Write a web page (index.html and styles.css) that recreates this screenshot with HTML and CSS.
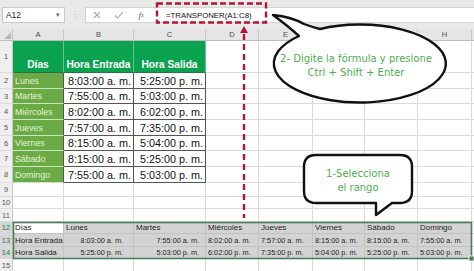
FILE: index.html
```html
<!DOCTYPE html>
<html lang="es">
  <head>
    <meta charset="utf-8">
    <title>TRANSPONER</title>
    <link rel="stylesheet" href="styles.css">
  </head>
  <body>
    <div class="app">
      <div class="toolbar">
        <div class="namebox"><span>A12</span><span class="arrow">&#9662;</span></div>
        <div class="dots">&#8942;</div>
        <div class="formula">
          <span class="fbtn">
            <svg width="8" height="8" viewBox="0 0 8 8"><path d="M1 1L7 7M7 1L1 7" stroke="#a8a8a8" stroke-width="1.1" fill="none"/></svg>
          </span>
          <span class="fbtn">
            <svg width="10" height="8" viewBox="0 0 10 8"><path d="M1 4.5L3.6 7L9 1" stroke="#a8a8a8" stroke-width="1.1" fill="none"/></svg>
          </span>
          <span class="fbtn fx">f<sub>x</sub></span>
          <span class="ftext">=TRANSPONER(A1:C8)</span>
        </div>
      </div>

      <div class="sheet">
        <!-- cabecera de columnas -->
        <div class="c corner"><span class="tri"></span></div>
        <div class="c ch">A</div><div class="c ch">B</div><div class="c ch">C</div><div class="c ch">D</div>
        <div class="c ch">E</div><div class="c ch">F</div><div class="c ch">G</div><div class="c ch">H</div><div class="c ch end"></div>

        <!-- fila 1 -->
        <div class="c rh">1</div>
        <div class="c g1">Días</div><div class="c g1">Hora Entrada</div><div class="c g1">Hora Salida</div>
        <div class="c"></div><div class="c"></div><div class="c"></div><div class="c"></div><div class="c"></div><div class="c end"></div>

        <!-- filas 2 a 8 -->
        <div class="c rh">2</div>
        <div class="c g2">Lunes</div><div class="c t">8:03:00 a. m.</div><div class="c t">5:25:00 p. m.</div>
        <div class="c"></div><div class="c"></div><div class="c"></div><div class="c"></div><div class="c"></div><div class="c end"></div>

        <div class="c rh">3</div>
        <div class="c g2">Martes</div><div class="c t">7:55:00 a. m.</div><div class="c t">5:03:00 p. m.</div>
        <div class="c"></div><div class="c"></div><div class="c"></div><div class="c"></div><div class="c"></div><div class="c end"></div>

        <div class="c rh">4</div>
        <div class="c g2">Miércoles</div><div class="c t">8:02:00 a. m.</div><div class="c t">6:02:00 p. m.</div>
        <div class="c"></div><div class="c"></div><div class="c"></div><div class="c"></div><div class="c"></div><div class="c end"></div>

        <div class="c rh">5</div>
        <div class="c g2">Jueves</div><div class="c t">7:57:00 a. m.</div><div class="c t">7:35:00 p. m.</div>
        <div class="c"></div><div class="c"></div><div class="c"></div><div class="c"></div><div class="c"></div><div class="c end"></div>

        <div class="c rh">6</div>
        <div class="c g2">Viernes</div><div class="c t">8:15:00 a. m.</div><div class="c t">5:04:00 p. m.</div>
        <div class="c"></div><div class="c"></div><div class="c"></div><div class="c"></div><div class="c"></div><div class="c end"></div>

        <div class="c rh">7</div>
        <div class="c g2">Sábado</div><div class="c t">8:15:00 a. m.</div><div class="c t">5:25:00 p. m.</div>
        <div class="c"></div><div class="c"></div><div class="c"></div><div class="c"></div><div class="c"></div><div class="c end"></div>

        <div class="c rh">8</div>
        <div class="c g2">Domingo</div><div class="c t">7:55:00 a. m.</div><div class="c t">5:03:00 p. m.</div>
        <div class="c"></div><div class="c"></div><div class="c"></div><div class="c"></div><div class="c"></div><div class="c end"></div>

        <!-- filas vacias -->
        <div class="c rh">9</div>
        <div class="c"></div><div class="c"></div><div class="c"></div><div class="c"></div>
        <div class="c"></div><div class="c"></div><div class="c"></div><div class="c"></div><div class="c end"></div>

        <div class="c rh">10</div>
        <div class="c"></div><div class="c"></div><div class="c"></div><div class="c"></div>
        <div class="c"></div><div class="c"></div><div class="c"></div><div class="c"></div><div class="c end"></div>

        <div class="c rh">11</div>
        <div class="c"></div><div class="c"></div><div class="c"></div><div class="c"></div>
        <div class="c"></div><div class="c"></div><div class="c"></div><div class="c"></div><div class="c end"></div>

        <!-- rango transpuesto -->
        <div class="c rh hl">12</div>
        <div class="c s act pl">Días</div><div class="c s pl">Lunes</div><div class="c s pl">Martes</div><div class="c s pl">Miércoles</div>
        <div class="c s pl">Jueves</div><div class="c s pl">Viernes</div><div class="c s pl">Sábado</div><div class="c s pl">Domingo</div><div class="c end"></div>

        <div class="c rh hl">13</div>
        <div class="c s pl">Hora Entrada</div><div class="c s tm pb">8:03:00 a. m.</div><div class="c s tm pc">7:55:00 a. m.</div><div class="c s tm pl">8:02:00 a. m.</div>
        <div class="c s tm pl">7:57:00 a. m.</div><div class="c s tm pl">8:15:00 a. m.</div><div class="c s tm pl">8:15:00 a. m.</div><div class="c s tm pl">7:55:00 a. m.</div><div class="c end"></div>

        <div class="c rh hl">14</div>
        <div class="c s pl">Hora Salida</div><div class="c s tm pb">5:25:00 p. m.</div><div class="c s tm pc">5:03:00 p. m.</div><div class="c s tm pl">6:02:00 p. m.</div>
        <div class="c s tm pl">7:35:00 p. m.</div><div class="c s tm pl">5:04:00 p. m.</div><div class="c s tm pl">5:25:00 p. m.</div><div class="c s tm pl">5:03:00 p. m.</div><div class="c end"></div>

        <div class="c rh">15</div>
        <div class="c"></div><div class="c"></div><div class="c"></div><div class="c"></div>
        <div class="c"></div><div class="c"></div><div class="c"></div><div class="c"></div><div class="c end"></div>
      </div>

      <!-- anotaciones encima de la hoja -->
      <svg class="overlay" width="474" height="271" viewBox="0 0 474 271">
        <rect x="157" y="3.5" width="109" height="19" fill="none" stroke="#b3162f" stroke-width="2.4" stroke-dasharray="6 3"/>
        <path d="M244 34V218" stroke="#b3162f" stroke-width="2.4" stroke-dasharray="6 4"/>
        <path d="M244 26L240 33H248Z" fill="#b3162f"/>

        <rect x="13.5" y="222.5" width="458" height="36" fill="none" stroke="#4a7c5d" stroke-width="1.6"/>
        <rect x="469" y="256" width="5" height="5" fill="#4a7c5d" stroke="#fff" stroke-width="0.8"/>

        <path class="bubble" d="M320 29A86 39 0 1 1 299 36Q288 26 273 15Q292 17 304 24Q312 27 320 29Z"/>
        <text class="note" x="356" y="61.5">2- Digite la fórmula y presione</text>
        <text class="note" x="356" y="75.5">Ctrl + Shift + Enter</text>

        <path class="bubble" d="M316 155H400Q412 155 412 167V191Q412 203 400 203H392L376 215V203H316Q304 203 304 191V167Q304 155 316 155Z"/>
        <text class="note" x="358" y="176.5">1-Selecciona</text>
        <text class="note" x="358" y="190.5">el rango</text>
      </svg>
    </div>
  </body>
</html>
```

FILE: styles.css
```css
body{
  margin: 0;
  background: #fff;
}
.app{
  position: relative;
  width: 474px;
  height: 271px;
  overflow: hidden;
  font-family: "Liberation Sans", Arial, sans-serif;
}

/* barra de formulas */
.toolbar{
  height: 29px;
  box-sizing: border-box;
  padding-top: 7px;
  background: #e9e9e9;
  display: flex;
  align-items: flex-start;
}
.namebox{
  margin-left: 2px;
  width: 63px;
  height: 16px;
  box-sizing: border-box;
  padding: 0 4px 0 3px;
  background: #fff;
  border: 1px solid #c9c9c9;
  display: flex;
  align-items: center;
  justify-content: space-between;
  font-size: 8.4px;
  color: #222;
}
.namebox .arrow{
  font-size: 7px;
  color: #666;
}
.dots{
  width: 20px;
  height: 16px;
  line-height: 16px;
  text-align: center;
  font-size: 9px;
  color: #b5b5b5;
}
.formula{
  flex: 1;
  height: 16px;
  box-sizing: border-box;
  background: #fff;
  border: 1px solid #d3d3d3;
  border-right: none;
  display: flex;
  align-items: center;
}
.fbtn{
  width: 22px;
  display: flex;
  justify-content: center;
  align-items: center;
}
.fx{
  font-family: "Liberation Serif", serif;
  font-style: italic;
  font-size: 9px;
  color: #555;
}
.fx sub{
  font-size: 6px;
}
.ftext{
  padding-left: 14px;
  font-size: 7.8px;
  color: #111;
  white-space: nowrap;
}

/* hoja */
.sheet{
  display: grid;
  grid-template-columns: 13px 51px 70px 72px 53px 54px 52px 53px 54px 2px;
  grid-template-rows: 12px 32px 16px 15px 16px 16px 15px 16px 16px 14px 12px 13px 12px 13px 12px 13px;
}
.c{
  box-sizing: border-box;
  border-right: 1px solid #dadada;
  border-bottom: 1px solid #dadada;
  overflow: hidden;
  white-space: nowrap;
  display: flex;
  align-items: center;
  font-size: 7.6px;
  color: #222;
}
.c.end{
  border-right: none;
}
.corner{
  position: relative;
  background: #e6e6e6;
  border-right-color: #c6c6c6;
  border-bottom-color: #bdbdbd;
}
.tri{
  position: absolute;
  right: 1px;
  bottom: 1px;
  width: 0;
  height: 0;
  border-left: 7px solid transparent;
  border-bottom: 7px solid #b9b9b9;
}
.ch{
  justify-content: center;
  background: #e6e6e6;
  color: #4a4a4a;
  font-size: 7.5px;
  border-right-color: #c9c9c9;
  border-bottom-color: #bdbdbd;
}
.rh{
  justify-content: center;
  background: #efefef;
  color: #555;
  font-size: 7.5px;
  border-right-color: #c9c9c9;
  border-bottom-color: #dcdcdc;
}
.rh.hl{
  background: #d6d6d6;
  color: #2d7a4a;
}

/* tabla original */
.g1{
  align-items: flex-end;
  justify-content: center;
  padding-bottom: 2px;
  background: #0ba24f;
  color: #fff;
  font-weight: bold;
  font-size: 10.2px;
  border-right-color: rgba(255,255,255,.35);
  border-bottom-color: #2f6f45;
}
.g2{
  padding-left: 2px;
  background: #6aab46;
  color: #e3f2d6;
  font-size: 8.8px;
  border-right-color: #555;
  border-bottom-color: #cfe3c1;
}
.t{
  justify-content: flex-end;
  padding-right: 2px;
  font-size: 10.8px;
  color: #111;
  border-right-color: #555;
  border-bottom-color: #555;
}

/* rango transpuesto */
.s{
  background: #d3d3d3;
  border-right-color: #c2c2c2;
  border-bottom-color: #c2c2c2;
  color: #1d1d1d;
  font-size: 8px;
}
.s.act{
  background: #fff;
}
.tm{
  font-size: 7.3px;
}
.pl{
  padding-left: 2px;
}
.pb{
  justify-content: flex-end;
  padding-right: 10px;
}
.pc{
  justify-content: flex-end;
  padding-right: 6px;
}

/* anotaciones */
.overlay{
  position: absolute;
  left: 0;
  top: 0;
  pointer-events: none;
}
.bubble{
  fill: #fff;
  stroke: #111;
  stroke-width: 2.4;
  stroke-linejoin: round;
}
.note{
  font-family: "DejaVu Sans", Verdana, sans-serif;
  font-size: 10px;
  fill: #4fae4f;
  text-anchor: middle;
}
```
